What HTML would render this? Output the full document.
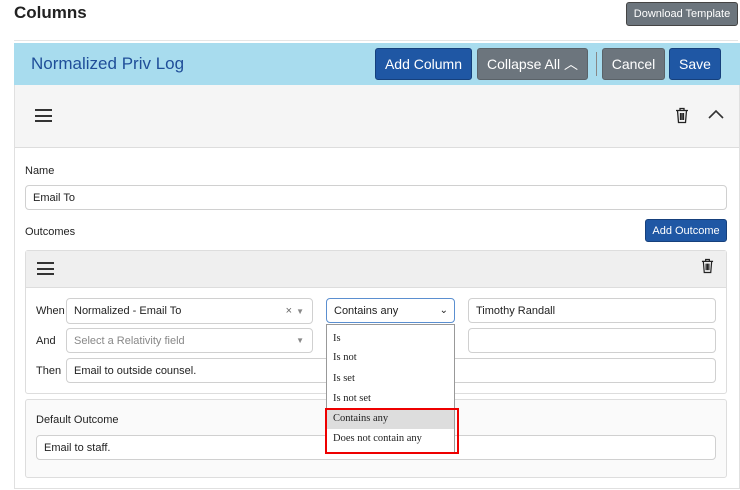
<!DOCTYPE html>
<html><head><style>
*{box-sizing:border-box;margin:0;padding:0}
body{width:740px;height:490px;background:#fff;font-family:"Liberation Sans",sans-serif;position:relative;overflow:hidden;color:#222}
.a{position:absolute}
.btn{position:absolute;color:#fff;font-size:14px;display:flex;align-items:center;justify-content:center;border-radius:3px}
.blue{background:#1f57a4;border:1px solid #16407c}
.gray{background:#6c757d;border:1px solid #5a6268}
.inp{position:absolute;border:1px solid #d0d0d0;border-radius:4px;background:#fff;font-size:11px;display:flex;align-items:center;padding-left:7px}
.lbl{position:absolute;font-size:11px}
.ham{position:absolute;width:17px;height:13px;border-top:2px solid #333;border-bottom:2px solid #333}
.ham:after{content:"";position:absolute;left:0;right:0;top:3.5px;border-top:2px solid #333}
.dd{position:absolute;font-family:"Liberation Serif",serif;font-size:10.5px;left:333px}
</style></head><body>
<div class="a" style="left:14px;top:3px;font-size:17px;font-weight:bold;color:#222">Columns</div>
<div class="a" style="left:14px;top:40px;width:724px;border-top:1px solid #e5e5e5"></div>
<div class="btn gray" style="left:626px;top:2px;width:112px;height:24px;font-size:11px;border-color:#444">Download Template</div>

<div class="a" style="left:14px;top:43px;width:726px;height:446px;border:1px solid #e0e0e0"></div>
<div class="a" style="left:14px;top:43px;width:726px;height:42px;background:#a8dcee"></div>
<div class="a" style="left:31px;top:54px;font-size:17px;color:#1f4e99">Normalized Priv Log</div>
<div class="btn blue" style="left:375px;top:48px;width:97px;height:32px">Add Column</div>
<div class="btn gray" style="left:477px;top:48px;width:111px;height:32px">Collapse All ︿</div>
<div class="a" style="left:596px;top:52px;height:24px;border-left:1px solid #888"></div>
<div class="btn gray" style="left:602px;top:48px;width:63px;height:32px">Cancel</div>
<div class="btn blue" style="left:669px;top:48px;width:52px;height:32px">Save</div>

<div class="a" style="left:15px;top:85px;width:724px;height:63px;background:#f5f5f5;border-bottom:1px solid #ddd"></div>
<div class="ham" style="left:35px;top:109px"></div>
<svg class="a" style="left:675px;top:107px" width="14" height="17" viewBox="0 0 14 17"><path d="M1 3.5 H13 M5 3.5 V1.5 H9 V3.5 M2.5 3.5 L3.5 15.5 H10.5 L11.5 3.5 M5.5 6 V13 M7 6 V13 M8.5 6 V13" stroke="#222" stroke-width="1.3" fill="none"/></svg>
<svg class="a" style="left:707px;top:108px" width="18" height="12"><path d="M2 10 L9 3 L16 10" stroke="#333" stroke-width="1.6" fill="none"/></svg>

<div class="lbl" style="left:25px;top:165px">Name</div>
<div class="inp" style="left:25px;top:185px;width:702px;height:25px">Email To</div>
<div class="lbl" style="left:25px;top:226px">Outcomes</div>
<div class="btn blue" style="left:645px;top:219px;width:82px;height:23px;font-size:11px">Add Outcome</div>

<div class="a" style="left:25px;top:250px;width:702px;height:144px;border:1px solid #ddd;border-radius:3px"></div>
<div class="a" style="left:26px;top:251px;width:700px;height:37px;background:#efefef;border-bottom:1px solid #ddd"></div>
<div class="ham" style="left:37px;top:262px"></div>
<svg class="a" style="left:701px;top:258px" width="13" height="16" viewBox="0 0 14 17"><path d="M1 3.5 H13 M5 3.5 V1.5 H9 V3.5 M2.5 3.5 L3.5 15.5 H10.5 L11.5 3.5 M5.5 6 V13 M7 6 V13 M8.5 6 V13" stroke="#222" stroke-width="1.3" fill="none"/></svg>

<div class="lbl" style="left:36px;top:305px">When</div>
<div class="inp" style="left:66px;top:298px;width:247px;height:26px">Normalized - Email To<span style="position:absolute;right:20px;color:#666">×</span><span style="position:absolute;right:8px;color:#888;font-size:8px">▼</span></div>
<div class="inp" style="left:326px;top:298px;width:129px;height:25px;border-color:#5b8fd0">Contains any<span style="position:absolute;right:6px;font-size:10px">⌄</span></div>
<div class="inp" style="left:468px;top:298px;width:248px;height:25px">Timothy Randall</div>
<div class="lbl" style="left:36px;top:335px">And</div>
<div class="inp" style="left:66px;top:328px;width:247px;height:25px;color:#888">Select a Relativity field<span style="position:absolute;right:8px;color:#888;font-size:8px">▼</span></div>
<div class="inp" style="left:468px;top:328px;width:248px;height:25px"></div>
<div class="lbl" style="left:36px;top:365px">Then</div>
<div class="inp" style="left:66px;top:358px;width:650px;height:25px">Email to outside counsel.</div>

<div class="a" style="left:25px;top:399px;width:702px;height:79px;border:1px solid #ddd;border-radius:3px;background:#fafafa"></div>
<div class="lbl" style="left:36px;top:414px">Default Outcome</div>
<div class="inp" style="left:36px;top:435px;width:680px;height:25px">Email to staff.</div>

<div class="a" style="left:326px;top:324px;width:129px;height:130px;background:#fff;border:1px solid #999"></div>
<div class="a" style="left:327px;top:409px;width:127px;height:20px;background:#ddd"></div>
<div class="dd" style="top:333px">Is</div>
<div class="dd" style="top:352px">Is not</div>
<div class="dd" style="top:373px">Is set</div>
<div class="dd" style="top:393px">Is not set</div>
<div class="dd" style="top:413px">Contains any</div>
<div class="dd" style="top:433px">Does not contain any</div>
<div class="a" style="left:325px;top:408px;width:134px;height:46px;border:2px solid #e00"></div>
</body></html>
